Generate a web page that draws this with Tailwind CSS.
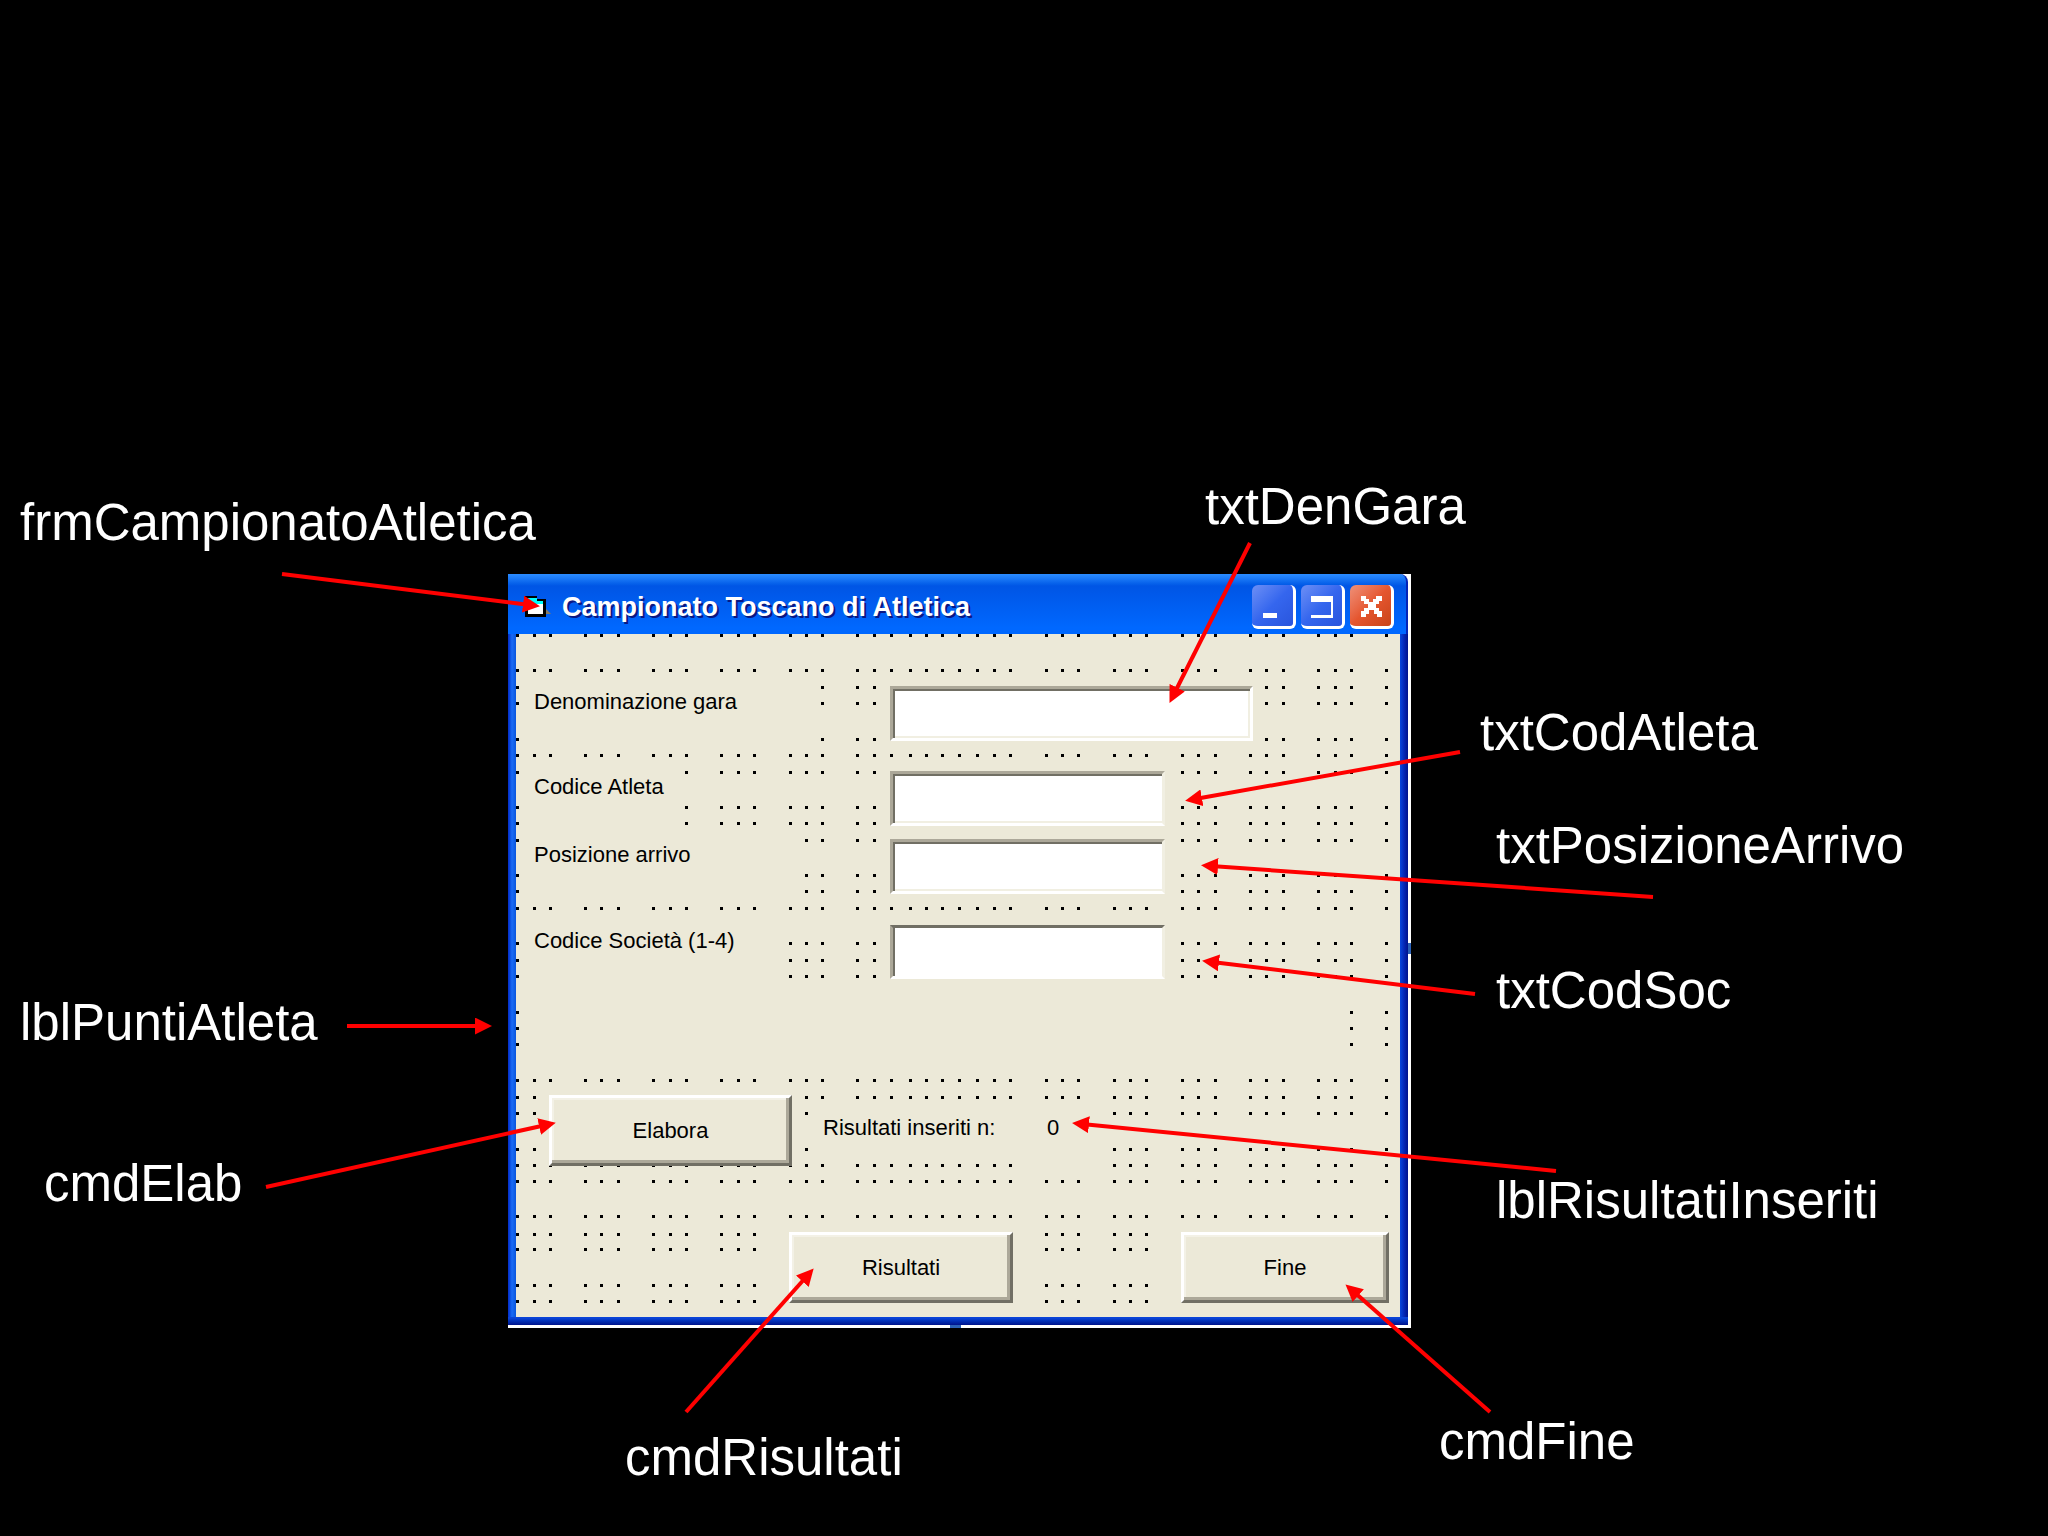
<!DOCTYPE html>
<html lang="it">
  <head>
    <meta charset="UTF-8" />
    <meta name="viewport" content="width=device-width, initial-scale=1.0" />
    <title>Campionato Toscano di Atletica</title>
    <script src="https://cdn.jsdelivr.net/npm/@tailwindcss/browser@4"></script>
  </head>
  <body class="bg-black">
    <main
      class="relative min-h-screen w-full overflow-hidden bg-black font-['Liberation_Sans',Arial,sans-serif]"
    >
      <!-- Form window -->
      <section
        class="absolute left-[508px] top-[574px] w-[903px] border-r-[3px] border-b-[3px] border-white bg-white"
      >
        <!-- Title bar -->
        <header
          class="flex h-[60px] items-center rounded-tr-lg border-r-2 border-[#0424b8] bg-linear-to-b from-[#2b8cff] from-0% via-[#0055e5] via-20% to-[#0068ff] to-90% pt-1.5 pl-4 pr-3"
        >
          <svg class="h-6 w-7" viewBox="0 0 28 24" aria-hidden="true">
            <path d="M1 1h12v3h9v18H1z" fill="#000" />
            <path d="M4 3h9v3h6v3H4z" fill="#0ff" />
            <path d="M4 9h15v10H4z" fill="#fff" />
            <path d="M22 14l5 5h-5z" fill="#857a63" />
          </svg>
          <h1
            class="ml-2.5 grow text-[27px] leading-8 font-bold text-white [text-shadow:2px_2px_0_#0a1883]"
          >
            Campionato Toscano di Atletica
          </h1>
          <div class="flex gap-[5px]">
            <button
              type="button"
              aria-label="Riduci a icona"
              class="h-11 w-11 rounded-md border-r-[3px] border-b-[3px] border-white bg-linear-to-br from-[#6d8ff5] via-[#3566ee] to-[#2a55dd]"
            >
              <svg class="h-full w-full" viewBox="0 0 41 41" aria-hidden="true">
                <path d="M11 28h14v5H11z" fill="#fff" />
              </svg>
            </button>
            <button
              type="button"
              aria-label="Ingrandisci"
              class="h-11 w-11 rounded-md border-r-[3px] border-b-[3px] border-white bg-linear-to-br from-[#6d8ff5] via-[#3566ee] to-[#2a55dd]"
            >
              <svg class="h-full w-full" viewBox="0 0 41 41" aria-hidden="true">
                <path d="M10 11h22v22H10v-3h20V17H10z" fill="#fff" />
              </svg>
            </button>
            <button
              type="button"
              aria-label="Chiudi"
              class="h-11 w-11 rounded-md border-r-[3px] border-b-[3px] border-white bg-linear-to-br from-[#ee9078] via-[#e5562f] to-[#c94418]"
            >
              <svg class="h-full w-full" viewBox="0 0 41 41" aria-hidden="true">
                <path
                  d="M11 11h5v3h3v3h4v-3h3v-3h6v5h-3v3h-3v4h3v3h3v6h-5v-3h-3v-4h-5v4h-3v3h-5v-6h3v-3h4v-4h-4v-3h-3z"
                  fill="#fff"
                />
              </svg>
            </button>
          </div>
        </header>

        <!-- Frame -->
        <div class="bg-linear-to-b from-[#0a44d8] from-99% to-[#00128c] pb-2">
          <div class="grid grid-cols-[8px_1fr_8px]">
            <div class="bg-linear-to-r from-[#0828c8] via-[#1a6bf5] to-[#0855dd]"></div>

            <!-- Design surface, the grid dots sit under the controls -->
            <form class="relative bg-[#ece9d8] pt-[52px] pb-3.5 text-[22px] leading-6 text-black">
              <svg id="gridDots" class="absolute inset-0 h-full w-full" aria-hidden="true"></svg>

              <div class="relative flex flex-col pl-[15px]">
                <div class="grid h-[55px] grid-cols-[359px_1fr]">
                  <label for="txtDenGara" class="-my-0.5 w-[282px] bg-[#ece9d8] pt-1.5 pl-[3px]">Denominazione gara</label>
                  <input
                    id="txtDenGara"
                    type="text"
                    class="w-[363px] border-[3px] border-t-[#aca899] border-r-white border-b-white border-l-[#aca899] bg-white px-2 shadow-[inset_2px_2px_#716f64,inset_-2px_-2px_#f1efe2]"
                  />
                </div>
                <div class="mt-[30px] grid h-[55px] grid-cols-[359px_1fr]">
                  <label for="txtCodAtleta" class="-my-0.5 w-[147px] bg-[#ece9d8] pt-1.5 pl-[3px]">Codice Atleta</label>
                  <input
                    id="txtCodAtleta"
                    type="text"
                    class="w-[275px] border-[3px] border-t-[#aca899] border-r-[#f1efe2] border-b-white border-l-[#aca899] bg-white px-2 shadow-[inset_2px_2px_#716f64,inset_0_-2px_#f1efe2]"
                  />
                </div>
                <div class="mt-[13px] grid h-[55px] grid-cols-[359px_1fr]">
                  <label for="txtPosizioneArrivo" class="-my-0.5 w-[265px] bg-[#ece9d8] pt-1.5 pl-[3px]">Posizione arrivo</label>
                  <input
                    id="txtPosizioneArrivo"
                    type="text"
                    class="w-[275px] border-[3px] border-t-[#aca899] border-r-[#f1efe2] border-b-white border-l-[#aca899] bg-white px-2 shadow-[inset_2px_2px_#716f64,inset_0_-2px_#f1efe2]"
                  />
                </div>
                <div class="mt-[31px] grid h-[54px] grid-cols-[359px_1fr]">
                  <label for="txtCodSoc" class="-my-0.5 w-[240px] bg-[#ece9d8] pt-1.5 pl-[3px]">Codice Società (1-4)</label>
                  <input
                    id="txtCodSoc"
                    type="text"
                    class="w-[275px] border-[3px] border-t-[#716f64] border-r-[#f1efe2] border-b-white border-l-[#aca899] bg-white px-2 shadow-[inset_2px_0_#716f64]"
                  />
                </div>
                <output id="lblPuntiAtleta" class="mt-[26px] block h-[45px] w-[812px] bg-[#ece9d8]"></output>
              </div>

              <div class="relative mt-[45px] flex items-start pl-[33px]">
                <button
                  type="button"
                  class="h-[71px] w-[243px] border-[3px] border-t-white border-r-[#716f64] border-b-[#716f64] border-l-white bg-[#ece9d8] shadow-[inset_-3px_-3px_#aca899,inset_2px_2px_#f3f1e6]"
                >
                  Elabora
                </button>
                <label for="lblRisultatiInseriti" class="mt-[15px] ml-7 h-[45px] w-[210px] bg-[#ece9d8] pt-1.5 pl-[3px]">Risultati inseriti n:</label>
                <output id="lblRisultatiInseriti" class="mt-[15px] ml-3.5 h-[60px] w-10 bg-[#ece9d8] pt-1.5 pl-[3px]">0</output>
              </div>

              <div class="relative mt-[62px] flex gap-[168px] pl-[273px]">
                <button
                  type="button"
                  class="h-[71px] w-[224px] border-[3px] border-t-white border-r-[#716f64] border-b-[#716f64] border-l-white bg-[#ece9d8] shadow-[inset_-3px_-3px_#aca899,inset_2px_2px_#f3f1e6]"
                >
                  Risultati
                </button>
                <button
                  type="button"
                  class="h-[71px] w-[208px] border-[3px] border-t-white border-r-[#716f64] border-b-[#716f64] border-l-white bg-[#ece9d8] shadow-[inset_-3px_-3px_#aca899,inset_2px_2px_#f3f1e6]"
                >
                  Fine
                </button>
              </div>
            </form>

            <div class="bg-linear-to-r from-[#0a48dc] via-[#0528b8] to-[#00128c]"></div>
          </div>
        </div>

        <!-- Resize handles -->
        <span class="absolute top-[369px] -right-[3px] h-[11px] w-[3px] bg-[#2b62b8]"></span>
        <span class="absolute -bottom-[3px] left-[442px] h-[3px] w-[11px] bg-[#2b62b8]"></span>
      </section>

      <!-- Control names -->
      <div class="text-[51px] leading-none whitespace-nowrap text-white">
        <p class="absolute top-[497px] left-5">frmCampionatoAtletica</p>
        <p class="absolute top-[481px] left-[1205px]">txtDenGara</p>
        <p class="absolute top-[707px] left-[1480px]">txtCodAtleta</p>
        <p class="absolute top-[820px] left-[1496px]">txtPosizioneArrivo</p>
        <p class="absolute top-[965px] left-[1496px]">txtCodSoc</p>
        <p class="absolute top-[1175px] left-[1496px]">lblRisultatiInseriti</p>
        <p class="absolute top-[997px] left-5">lblPuntiAtleta</p>
        <p class="absolute top-[1158px] left-11">cmdElab</p>
        <p class="absolute top-[1432px] left-[625px]">cmdRisultati</p>
        <p class="absolute top-[1416px] left-[1439px]">cmdFine</p>
      </div>

      <!-- Arrows -->
      <svg
        class="pointer-events-none absolute top-0 left-0 h-full w-full"
        stroke="#f00"
        stroke-width="4"
        aria-hidden="true"
      >
        <defs>
          <marker
            id="head"
            markerUnits="userSpaceOnUse"
            markerWidth="17"
            markerHeight="17"
            refX="7"
            refY="8.5"
            orient="auto"
          >
            <path d="M0 0L17 8.5L0 17z" fill="#f00" stroke="none" />
          </marker>
        </defs>
        <path d="M282 574L530 605" marker-end="url(#head)" />
        <path d="M1250 543L1174 694" marker-end="url(#head)" />
        <path d="M1460 752L1195 799" marker-end="url(#head)" />
        <path d="M1653 897L1211 866" marker-end="url(#head)" />
        <path d="M1475 994L1212 962" marker-end="url(#head)" />
        <path d="M1556 1171L1082 1124" marker-end="url(#head)" />
        <path d="M1490 1412L1353 1291" marker-end="url(#head)" />
        <path d="M686 1412L807 1276" marker-end="url(#head)" />
        <path d="M266 1187L546 1125" marker-end="url(#head)" />
        <path d="M347 1026L482 1026" marker-end="url(#head)" />
      </svg>
    </main>

    <script>
      // Grid dot positions on the form
      const columns = [
        0, 17, 33, 68, 84, 101, 136, 153, 169, 204, 221, 237, 273, 289, 305,
        340, 357, 374, 393, 409, 425, 442, 460, 477, 493, 529, 545, 561, 597,
        613, 629, 665, 681, 698, 733, 749, 766, 801, 818, 834, 869,
      ];
      const rows = [
        0, 35, 52, 68, 104, 120, 137, 172, 188, 205, 240, 256, 273, 308, 325,
        341, 377, 393, 409, 445, 462, 478, 514, 530, 546, 581, 599, 614, 650,
        666,
      ];

      let dots = "";
      rows.forEach((y) => {
        columns.forEach((x) => {
          dots += `<rect x="${x}" y="${y}" width="3" height="3" fill="#000" />`;
        });
      });
      document.getElementById("gridDots").innerHTML = dots;
    </script>
  </body>
</html>
